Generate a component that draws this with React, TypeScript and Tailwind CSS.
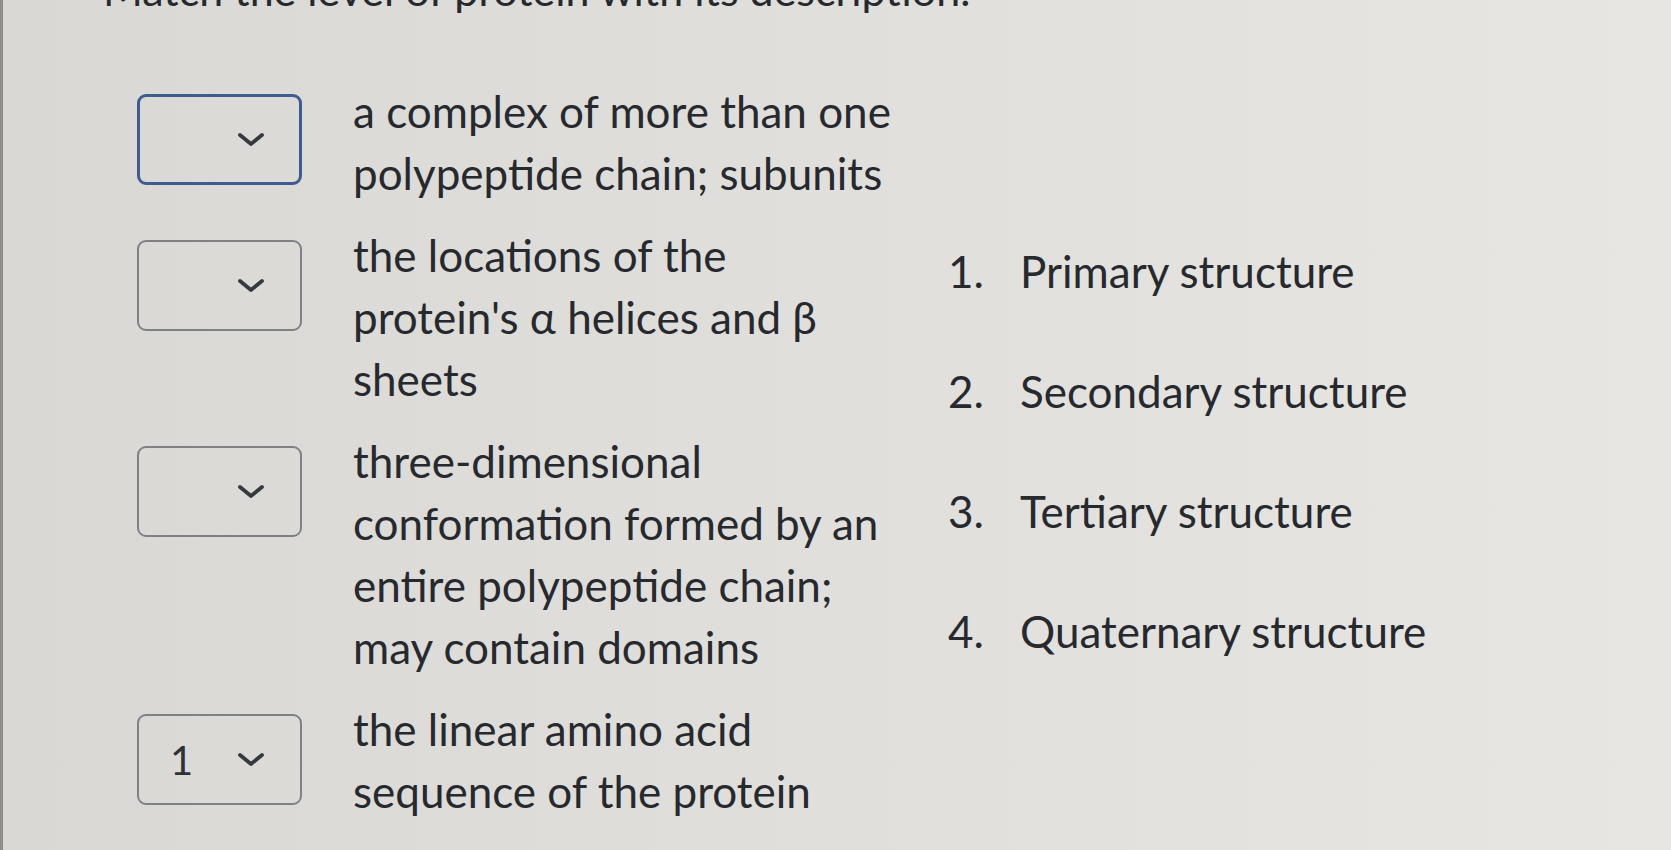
import React from 'react';

type Row = {
  value: string;
  lines: string[];
  focused?: boolean;
};

const rows: Row[] = [
  { value: '', lines: ['a complex of more than one', 'polypeptide chain; subunits'], focused: true },
  { value: '', lines: ['the locations of the', "protein's α helices and β", 'sheets'] },
  {
    value: '',
    lines: ['three-dimensional', 'conformation formed by an', 'entire polypeptide chain;', 'may contain domains'],
  },
  { value: '1', lines: ['the linear amino acid', 'sequence of the protein'] },
];

const levels = ['Primary structure', 'Secondary structure', 'Tertiary structure', 'Quaternary structure'];

function Chevron() {
  return (
    <svg width="30" height="17" viewBox="0 0 30 17" fill="none" className="shrink-0">
      <polyline
        points="4,4 15,13 26,4"
        stroke="#353a40"
        strokeWidth="3.8"
        strokeLinecap="round"
        strokeLinejoin="round"
      />
    </svg>
  );
}

function MatchSelect({ value, focused }: { value: string; focused?: boolean }) {
  return (
    <div
      className={
        focused
          ? 'mt-[14px] flex h-[91px] w-[165px] shrink-0 items-center rounded-[9px] border-[3px] border-[#3d5d90] pl-[30px]'
          : 'mt-[16px] flex h-[91px] w-[165px] shrink-0 items-center rounded-[9px] border-2 border-[#7f8185] pl-[31px]'
      }
    >
      <span className="w-[66px] text-[40px] leading-none text-[#2e3238]">{value}</span>
      <Chevron />
    </div>
  );
}

export default function App() {
  return (
    <div className="h-[850px] overflow-hidden border-l-[3px] border-[#8e8e8c] bg-linear-to-r from-[#d9d8d5] via-[#e0dfdc] to-[#e7e6e3] font-[Lato,sans-serif] text-[#26292e]">
      {/* question heading, scrolled mostly out of view */}
      <h2 className="-mt-[41px] ml-[100px] text-[43px] leading-[62px] whitespace-nowrap">
        Match the level of protein with its description.
      </h2>

      <div className="mt-[59px] flex items-center">
        {/* descriptions with their answer dropdowns */}
        <div className="ml-[134px] flex flex-col gap-[20px]">
          {rows.map((row, i) => (
            <div key={i} className="flex items-start">
              <MatchSelect value={row.value} focused={row.focused} />
              <p className="ml-[51px] w-[540px] text-[44px] leading-[62px]">
                {row.lines.map((line, j) => (
                  <span key={j} className="block whitespace-nowrap">
                    {line}
                  </span>
                ))}
              </p>
            </div>
          ))}
        </div>

        {/* answer choices */}
        <ol className="ml-[55px] flex flex-col gap-[58px] text-[44px] leading-[62px]">
          {levels.map((level, i) => (
            <li key={level} className="flex whitespace-nowrap">
              <span className="w-[72px]">{i + 1}.</span>
              <span>{level}</span>
            </li>
          ))}
        </ol>
      </div>
    </div>
  );
}
